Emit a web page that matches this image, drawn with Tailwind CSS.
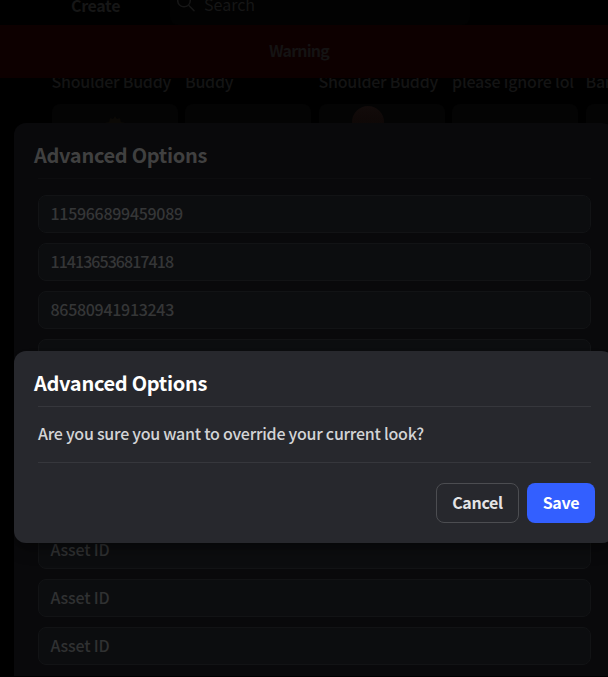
<!DOCTYPE html>
<html lang="en">
<head>
    <meta charset="UTF-8">
    <meta name="viewport" content="width=device-width, initial-scale=1.0">
    <title>Advanced Options</title>
    <script src="https://cdn.jsdelivr.net/npm/@tailwindcss/browser@4"></script>
</head>
<body class="relative h-[677px] overflow-hidden bg-black font-['Noto_Sans_CJK_SC','Noto_Sans',sans-serif] text-base leading-6">

    <!-- page -->
    <header class="flex h-[25px] items-end pl-[71px] text-[#161616]">
        <a class="h-8 w-[99px] font-bold tracking-[-0.35px]">Create</a>
        <div class="flex h-[38px] w-[300px] gap-2 rounded-lg bg-[#020202] pl-[7px] pt-[5px]">
            <svg class="mt-0.5 h-5 w-5" viewBox="0 0 20 20" fill="none" stroke="#161616" stroke-width="1.5" stroke-linecap="round"><circle cx="7" cy="6.5" r="6.3"/><path d="M11.6 11.2l5.4 5.4"/></svg>
            <span class="-ml-px">Search</span>
        </div>
    </header>
    <div class="flex h-[53px] items-center justify-center bg-[#0d0000] pr-2.5 pb-[3px] font-bold tracking-[-0.8px] text-[#141313]">Warning</div>
    <main class="ml-[51.5px] flex h-[60px] gap-[7.5px] overflow-hidden text-[#141414]">
        <div class="w-[126px] shrink-0">
            <p class="-mt-[9px] mb-[11px] whitespace-nowrap font-medium tracking-[-0.25px]">Shoulder Buddy</p>
            <div class="flex h-[126px] justify-center rounded-lg bg-[#040404] pt-3">
                <svg class="h-4 w-6" viewBox="0 0 24 16" fill="#0b0906"><path d="M12 0l2 3 3-1 1 4 5 1-1 6H2L1 7l5-1 1-4 3 1z"/></svg>
            </div>
        </div>
        <div class="w-[126px] shrink-0">
            <p class="-mt-[9px] mb-[11px] whitespace-nowrap font-medium tracking-[-0.25px]">Buddy</p>
            <div class="h-[126px] rounded-lg bg-[#040404]"></div>
        </div>
        <div class="w-[126px] shrink-0">
            <p class="-mt-[9px] mb-[11px] whitespace-nowrap font-medium tracking-[-0.25px]">Shoulder Buddy</p>
            <div class="h-[126px] rounded-lg bg-[#040404] pl-[33px] pt-0.5">
                <div class="h-8 w-8 rounded-full bg-linear-to-b from-[#120b0a] to-[#0b0605]"></div>
            </div>
        </div>
        <div class="w-[126px] shrink-0">
            <p class="-mt-[9px] mb-[11px] whitespace-nowrap font-medium tracking-[-0.2px]">please ignore lol</p>
            <div class="h-[126px] rounded-lg bg-[#040404]"></div>
        </div>
        <div class="w-[126px] shrink-0">
            <p class="-mt-[9px] mb-[11px] whitespace-nowrap font-medium tracking-[-0.25px]">Bar</p>
            <div class="h-[126px] rounded-lg bg-[#040404]"></div>
        </div>
    </main>

    <!-- asset id dialog -->
    <div class="absolute left-[14px] top-[123px] h-[553px] w-[600px] overflow-hidden rounded-t-xl bg-[#09090b] pl-6 text-[#353637]">
        <h2 class="-ml-1 h-[55px] pt-[18px] text-xl leading-7 font-bold tracking-[-0.3px] text-[#404040]">Advanced Options</h2>
        <div class="flex w-[553px] flex-col gap-2.5 border-t border-[#0d0d0f] pt-4">
            <div class="flex h-[38px] items-center rounded-lg border border-[#121315] bg-[#0c0d0f] px-[11.5px] pb-0.5 font-medium tracking-[-0.3px]">115966899459089</div>
            <div class="flex h-[38px] items-center rounded-lg border border-[#121315] bg-[#0c0d0f] px-[11.5px] pb-0.5 font-medium tracking-[-0.95px]">114136536817418</div>
            <div class="flex h-[38px] items-center rounded-lg border border-[#121315] bg-[#0c0d0f] px-[11.5px] pb-0.5 font-medium tracking-[-0.3px]">86580941913243</div>
            <div class="h-[38px] rounded-lg border border-[#121315] bg-[#0c0d0f]"></div>
            <div class="h-[38px] rounded-lg border border-[#121315] bg-[#0c0d0f]"></div>
            <div class="h-[38px] rounded-lg border border-[#121315] bg-[#0c0d0f]"></div>
            <div class="h-[38px] rounded-lg border border-[#121315] bg-[#0c0d0f]"></div>
            <div class="flex h-[38px] items-center rounded-lg border border-[#121315] bg-[#0c0d0f] px-[11.5px] pb-0.5 font-medium tracking-[-0.2px] text-[#303132]">Asset ID</div>
            <div class="flex h-[38px] items-center rounded-lg border border-[#121315] bg-[#0c0d0f] px-[11.5px] pb-0.5 font-medium tracking-[-0.2px] text-[#303132]">Asset ID</div>
            <div class="flex h-[38px] items-center rounded-lg border border-[#121315] bg-[#0c0d0f] px-[11.5px] pb-0.5 font-medium tracking-[-0.2px] text-[#303132]">Asset ID</div>
        </div>
    </div>

    <!-- confirm dialog -->
    <div class="absolute left-[14px] top-[351px] h-[192px] w-[600px] rounded-xl bg-[#27282d] pl-6 shadow-lg shadow-black/30">
        <h2 class="-ml-1 h-[55px] pt-[18px] text-xl leading-7 font-bold tracking-[-0.3px] text-white">Advanced Options</h2>
        <p class="flex h-[57px] w-[553px] items-center border-y border-[#36373c] pb-[3px] font-medium tracking-[-0.25px] text-[#d3d4d6]">Are you sure you want to override your current look?</p>
        <div class="flex w-[557px] justify-end gap-2 pt-5 font-bold tracking-[-0.3px]">
            <button class="h-10 w-[83px] rounded-lg border border-[#4c4d51] pb-0.5 text-[#e4e4e6]">Cancel</button>
            <button class="h-10 w-[68px] rounded-lg bg-[#335fff] pb-0.5 text-white">Save</button>
        </div>
    </div>

</body>
</html>
